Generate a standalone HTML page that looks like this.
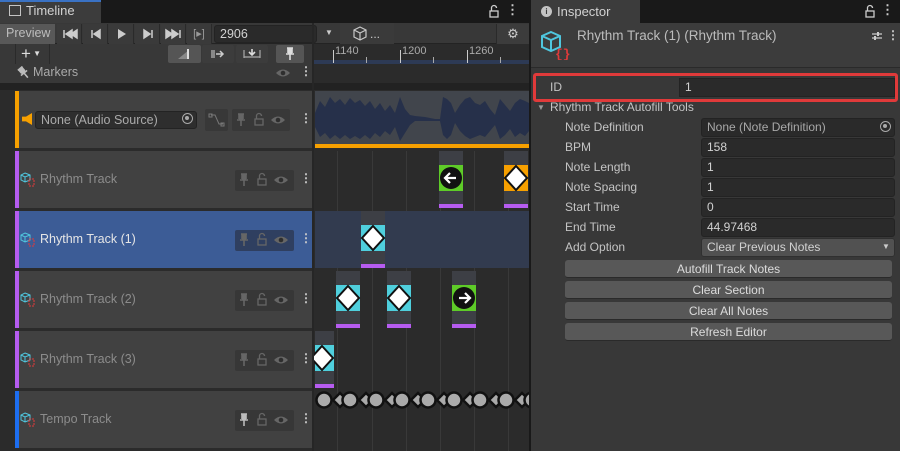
<!DOCTYPE html>
<html><head><meta charset="utf-8"><style>
*{box-sizing:border-box;margin:0;padding:0}
html,body{width:900px;height:451px;overflow:hidden}
body{background:#191919;font-family:"Liberation Sans",sans-serif;font-size:12px;color:#c4c4c4;position:relative}
.a{position:absolute}
.btn{position:absolute;background:#464646;border-radius:2px}
.fld{position:absolute;background:#2a2a2a;border:1px solid #232323;border-radius:3px;color:#d2d2d2;padding-left:5px;line-height:17px;font-size:12px}
.lbl{position:absolute;color:#c4c4c4;font-size:12px}
.ib{position:absolute;top:24px;width:25px;height:20px;border-right:1px solid #2a2a2a;background:#3a3a3a}
.ibtn{position:absolute;left:565px;width:327px;height:18px;background:#585858;border-radius:3px;text-align:center;line-height:18px;color:#dcdcdc;font-size:12px;border-bottom:1px solid #2a2a2a}
.vl{position:absolute;top:151px;height:300px;width:1px;background:#393939}
</style></head><body>
<svg width="0" height="0" style="position:absolute"><defs>
<g id="pin"><path d="M-3 -6 L3 -6 M-2 -6 L-2 -1 M2 -6 L2 -1 M-4 0 L4 0 M0 0 L0 6" stroke="currentColor" stroke-width="1.6" fill="none"/><rect x="-2" y="-6" width="4" height="6" fill="currentColor"/></g>
<g id="lock"><rect x="-4" y="-1" width="8" height="6" fill="none" stroke="currentColor" stroke-width="1.3"/><path d="M-2.5 -1 L-2.5 -4 A2.5 2.5 0 0 1 2.5 -4" fill="none" stroke="currentColor" stroke-width="1.3"/></g>
<g id="eye"><path d="M-7 0 Q0 -7 7 0 Q0 7 -7 0 Z" fill="currentColor"/><circle cx="0" cy="0" r="2.3" fill="#2e2e2e"/></g>
<g id="ple"><use href="#pin" x="9"/><use href="#lock" x="27"/><use href="#eye" x="46"/></g>
</defs></svg>

<!-- tabs -->
<div class="a" style="left:0;top:0;width:101px;height:23px;background:#3c3c3c;border-top:2px solid #3a72c4"></div>
<div class="a" style="left:9px;top:5px;width:12px;height:11px;border:1px solid #c4c4c4"></div>
<div class="a" style="left:26px;top:3px;font-size:13px;color:#d2d2d2">Timeline</div>
<svg class="a" style="left:488px;top:4px;color:#ccc" width="12" height="14"><use href="#lock" x="6" y="8"/></svg>
<div class="a" style="left:506px;top:2px;color:#ccc;font-size:13px;font-weight:bold">&#8942;</div>

<!-- timeline panel -->
<div class="a" style="left:0;top:23px;width:529px;height:428px;background:#2b2b2b"></div>
<div class="a" style="left:0;top:23px;width:529px;height:21px;background:#383838;border-bottom:1px solid #232323"></div>
<div class="a" style="left:0;top:24px;width:55px;height:20px;background:#585858;color:#bdbdbd;font-size:12.5px;line-height:19px;padding-left:6px">Preview</div>
<div class="ib" style="left:57px"><svg width="25" height="20"><path d="M7 6 L7 14 M15 6 L9 10 L15 14Z M20 6 L14 10 L20 14Z" stroke="#ccc" fill="#ccc" stroke-width="1.5"/></svg></div>
<div class="ib" style="left:83px"><svg width="25" height="20"><path d="M9 6 L9 14 M17 6 L11 10 L17 14Z" stroke="#ccc" fill="#ccc" stroke-width="1.5"/></svg></div>
<div class="ib" style="left:109px"><svg width="25" height="20"><path d="M9 5 L17 10 L9 15Z" fill="#ccc"/></svg></div>
<div class="ib" style="left:135px"><svg width="25" height="20"><path d="M17 6 L17 14 M9 6 L15 10 L9 14Z" stroke="#ccc" fill="#ccc" stroke-width="1.5"/></svg></div>
<div class="ib" style="left:161px"><svg width="25" height="20"><path d="M19 6 L19 14 M5 6 L11 10 L5 14Z M11 6 L17 10 L11 14Z" stroke="#ccc" fill="#ccc" stroke-width="1.5"/></svg></div>
<div class="ib" style="left:187px;width:25px;color:#999;font-size:11px;line-height:20px;text-align:center">[&#9656;]</div>
<div class="fld" style="left:214px;top:25px;width:103px;height:18px;font-size:12.5px">2906</div>
<div class="a" style="left:325px;top:28px;color:#ccc;font-size:8px">&#9660;</div>
<div class="a" style="left:340px;top:23px;width:54px;height:21px;background:#3a3a3a"></div>
<svg class="a" style="left:352px;top:26px" width="16" height="16" viewBox="0 0 16 16"><path d="M8 1 L14 4 L14 11 L8 14 L2 11 L2 4 Z M2 4 L8 7 L14 4 M8 7 L8 14" fill="none" stroke="#c8c8c8" stroke-width="1.2"/></svg>
<div class="a" style="left:370px;top:27px;color:#ccc">...</div>
<div class="a" style="left:496px;top:24px;width:33px;height:20px;background:#3c3c3c;border-left:1px solid #2a2a2a;text-align:center;color:#ccc;font-size:13px;line-height:20px">&#9881;&#xFE0E;</div>

<!-- row 2 -->
<div class="a" style="left:0;top:44px;width:313px;height:20px;background:#383838"></div>
<div class="a" style="left:15px;top:44px;width:35px;height:20px;border-left:1px solid #2a2a2a;border-right:1px solid #2a2a2a;color:#ddd;font-size:17px;line-height:19px;padding-left:5px">+<span style="font-size:8px;vertical-align:3px"> &#9660;</span></div>
<div class="btn" style="left:168px;top:45px;width:33px;height:18px;background:#555"><svg width="33" height="18"><path d="M10 14 L21 14 L21 5 Z" fill="#888"/><rect x="19" y="4" width="2" height="10" fill="#ddd"/></svg></div>
<div class="btn" style="left:202px;top:45px;width:32px;height:18px;background:#3c3c3c"><svg width="32" height="18"><rect x="9" y="5" width="4" height="8" fill="#888"/><path d="M14 9 L21 9 M18 6 L21 9 L18 12" stroke="#ccc" stroke-width="1.5" fill="none"/></svg></div>
<div class="btn" style="left:236px;top:45px;width:32px;height:18px;background:#3c3c3c"><svg width="32" height="18"><path d="M8 5 L8 13 M24 5 L24 13 M8 12 L24 12" stroke="#aaa" stroke-width="1.2"/><path d="M16 4 L16 10 M13 7 L16 10 L19 7" stroke="#ddd" stroke-width="1.6" fill="none"/></svg></div>
<div class="btn" style="left:276px;top:45px;width:28px;height:18px;background:#555"><svg width="28" height="18" style="color:#ddd"><use href="#pin" x="14" y="9"/></svg></div>

<!-- ruler -->
<div class="a" style="left:314px;top:44px;width:215px;height:20px;background:#2b2b2b"></div>
<div class="a" style="left:314px;top:60px;width:215px;height:4px;background:#2d3a55"></div>
<div class="a" style="left:333px;top:50px;width:1px;height:13px;background:#ccc"></div>
<div class="a" style="left:400px;top:50px;width:1px;height:13px;background:#ccc"></div>
<div class="a" style="left:467px;top:50px;width:1px;height:13px;background:#ccc"></div>
<div class="a" style="left:366px;top:57px;width:1px;height:6px;background:#aaa"></div>
<div class="a" style="left:433px;top:57px;width:1px;height:6px;background:#aaa"></div>
<div class="a" style="left:500px;top:57px;width:1px;height:6px;background:#aaa"></div>
<div class="a" style="left:335px;top:45px;color:#aaa;font-size:11px">1140</div>
<div class="a" style="left:402px;top:45px;color:#aaa;font-size:11px">1200</div>
<div class="a" style="left:469px;top:45px;color:#aaa;font-size:11px">1260</div>

<!-- markers -->
<div class="a" style="left:0;top:64px;width:313px;height:19px;background:#383838"></div>
<svg class="a" style="left:17px;top:66px;color:#bbb" width="14" height="14"><g transform="rotate(-40 7 7)"><use href="#pin" x="7" y="7"/></g></svg>
<div class="a" style="left:33px;top:65px;color:#aaa;font-size:12.5px">Markers</div>
<svg class="a" style="left:274px;top:66px;color:#666" width="18" height="14"><use href="#eye" x="9" y="7"/></svg>
<div class="a" style="left:300px;top:64px;color:#ccc;font-weight:bold">&#8942;</div>
<div class="a" style="left:0;top:83px;width:529px;height:7px;background:#222"></div>
<div class="a" style="left:312px;top:23px;width:2px;height:428px;background:#262626"></div>
<div class="a" style="left:529px;top:0;width:2px;height:451px;background:#191919"></div>

<!-- grid lines -->
<div class="vl" style="left:337px"></div><div class="vl" style="left:372px"></div><div class="vl" style="left:406px"></div><div class="vl" style="left:440px"></div><div class="vl" style="left:474px"></div><div class="vl" style="left:508px"></div>

<!-- track headers -->
<div class="a" style="left:15px;top:91px;width:297px;height:57px;background:#414141;border-left:4px solid #f7a000"></div>
<div class="a" style="left:22px;top:113px;width:10px;height:12px;background:#f7a000;clip-path:polygon(0 30%,40% 30%,100% 0,100% 100%,40% 70%,0 70%)"></div>
<div class="fld" style="left:35px;top:111px;width:162px;height:18px;color:#aaa;font-size:12.5px;background:#2e2e2e">None (Audio Source)</div>
<div class="a" style="left:182px;top:113px;width:11px;height:11px;border:1.5px solid #aaa;border-radius:50%"><div style="margin:2px;width:4px;height:4px;border-radius:50%;background:#aaa"></div></div>
<div class="btn" style="left:205px;top:109px;width:23px;height:22px;background:#383838"><svg width="23" height="22"><path d="M6 6 L10 6 L14 15 L18 15" stroke="#777" fill="none"/><rect x="4" y="5" width="3" height="3" fill="none" stroke="#777"/><rect x="16" y="14" width="3" height="3" fill="none" stroke="#777"/></svg></div>
<div class="btn" style="left:232px;top:109px;width:58px;height:22px;background:#383838;color:#666"><svg width="58" height="22"><use href="#ple" y="11"/></svg></div>
<div class="a" style="left:300px;top:111px;color:#ccc;font-weight:bold">&#8942;</div>

<!-- rhythm tracks -->
<div class="a" style="left:15px;top:151px;width:297px;height:57px;background:#414141;border-left:4px solid #b55cf0"></div>
<div class="a" style="left:15px;top:211px;width:297px;height:57px;background:#3c5c96;border-left:4px solid #b55cf0"></div>
<div class="a" style="left:15px;top:271px;width:297px;height:57px;background:#414141;border-left:4px solid #b55cf0"></div>
<div class="a" style="left:15px;top:331px;width:297px;height:57px;background:#414141;border-left:4px solid #b55cf0"></div>
<div class="a" style="left:15px;top:391px;width:297px;height:57px;background:#414141;border-left:4px solid #1d6ef0"></div>

<div class="a" style="left:40px;top:172px;color:#8c8c8c;font-size:12.5px">Rhythm Track</div>
<div class="a" style="left:40px;top:232px;color:#e6e6e6;font-size:12.5px">Rhythm Track (1)</div>
<div class="a" style="left:40px;top:292px;color:#8c8c8c;font-size:12.5px">Rhythm Track (2)</div>
<div class="a" style="left:40px;top:352px;color:#8c8c8c;font-size:12.5px">Rhythm Track (3)</div>
<div class="a" style="left:40px;top:412px;color:#8c8c8c;font-size:12.5px">Tempo Track</div>

<svg class="a" style="left:20px;top:172px" width="16" height="300" viewBox="0 0 16 300">
<g id="ic"><path d="M5 1 L10 3 L10 8 L5 10 L1 8 L1 3 Z M1 3 L5 5 L10 3 M5 5 L5 10" fill="none" stroke="#4fc6de" stroke-width="1"/><rect x="9" y="7" width="5" height="7" fill="none" stroke="#e03a3a" stroke-width="1" stroke-dasharray="2 1"/></g>
<use href="#ic" y="60"/><use href="#ic" y="120"/><use href="#ic" y="180"/><use href="#ic" y="240"/></svg>

<div class="btn" style="left:235px;top:170px;width:59px;height:21px;background:#373737;color:#666"><svg width="59" height="21"><use href="#ple" y="10"/></svg></div>
<div class="btn" style="left:235px;top:230px;width:59px;height:21px;background:#2f3f60;color:#666"><svg width="59" height="21"><use href="#ple" y="10"/></svg></div>
<div class="btn" style="left:235px;top:290px;width:59px;height:21px;background:#373737;color:#666"><svg width="59" height="21"><use href="#ple" y="10"/></svg></div>
<div class="btn" style="left:235px;top:350px;width:59px;height:21px;background:#373737;color:#666"><svg width="59" height="21"><use href="#ple" y="10"/></svg></div>
<div class="btn" style="left:235px;top:410px;width:59px;height:21px;background:#373737;color:#666"><svg width="59" height="21"><use href="#lock" x="27" y="10"/><use href="#eye" x="46" y="10"/><g style="color:#bbb"><use href="#pin" x="9" y="10"/></g></svg></div>
<div class="a" style="left:300px;top:171px;color:#ccc;font-weight:bold">&#8942;</div>
<div class="a" style="left:300px;top:231px;color:#ccc;font-weight:bold">&#8942;</div>
<div class="a" style="left:300px;top:291px;color:#ccc;font-weight:bold">&#8942;</div>
<div class="a" style="left:300px;top:351px;color:#ccc;font-weight:bold">&#8942;</div>
<div class="a" style="left:300px;top:411px;color:#ccc;font-weight:bold">&#8942;</div>

<!-- timeline content -->
<div class="a" style="left:315px;top:91px;width:214px;height:57px;background:#41454c"></div>
<svg class="a" style="left:315px;top:91px" width="214" height="57" viewBox="0 0 214 57">
<path d="M0 22 L5 10 L10 16 L15 6 L20 12 L25 8 L30 14 L35 7 L40 12 L45 9 L50 15 L55 10 L60 18 L65 12 L70 20 L75 14 L80 22 L85 6 L90 18 L95 24 L100 25 L110 26 L115 27 L120 28 L125 28 L128 6 L132 8 L136 12 L140 22 L145 14 L150 8 L155 6 L160 12 L165 14 L170 10 L175 18 L180 24 L185 8 L190 14 L195 20 L200 12 L205 8 L210 10 L214 12 L214 40 L210 45 L205 42 L200 46 L195 38 L190 44 L185 48 L180 34 L175 40 L170 46 L165 44 L160 46 L155 48 L150 45 L145 40 L140 32 L136 44 L132 48 L128 44 L125 30 L115 30 L100 30 L95 34 L90 42 L85 50 L80 36 L75 44 L70 40 L65 46 L60 42 L55 48 L50 44 L45 48 L40 45 L35 48 L30 44 L25 48 L20 44 L15 48 L10 42 L5 46 L0 36 Z" fill="#26304a"/>
<rect x="0" y="53" width="214" height="4" fill="#f7a000"/></svg>

<div class="a" style="left:315px;top:211px;width:214px;height:57px;background:#323b4f"></div>

<svg class="a" style="left:314px;top:151px" width="215" height="300" viewBox="0 0 215 300">
<defs>
<g id="blk"><rect x="0" y="0" width="24" height="57" fill="#3d3f45"/><rect x="0" y="53" width="24" height="4" fill="#b65cf0"/></g>
<g id="dia"><rect x="0" y="14" width="24" height="26" fill="#4fcfdd"/><path d="M12 15 L23 27 L12 39 L1 27 Z" fill="#fff" stroke="#111" stroke-width="2"/></g>
</defs>
<use href="#blk" x="125"/><rect x="125" y="14" width="24" height="26" fill="#5ecb28"/><circle cx="137" cy="27" r="11" fill="#111"/><path d="M142 27 L132 27 M136 22 L131 27 L136 32" stroke="#fff" stroke-width="2.2" fill="none"/>
<use href="#blk" x="190"/><rect x="190" y="14" width="24" height="26" fill="#f7a000"/><path d="M202 15 L213 27 L202 39 L191 27 Z" fill="#fff" stroke="#111" stroke-width="2"/>
<use href="#blk" x="47" y="60"/><use href="#dia" x="47" y="60"/>
<use href="#blk" x="22" y="120"/><use href="#dia" x="22" y="120"/>
<use href="#blk" x="73" y="120"/><use href="#dia" x="73" y="120"/>
<use href="#blk" x="138" y="120"/><rect x="138" y="134" width="24" height="26" fill="#5ecb28"/><circle cx="150" cy="147" r="11" fill="#111"/><path d="M145 147 L155 147 M151 142 L156 147 L151 152" stroke="#fff" stroke-width="2.2" fill="none"/>
<rect x="1" y="180" width="19" height="57" fill="#3d3f45"/><rect x="1" y="233" width="19" height="4" fill="#b65cf0"/><rect x="1" y="194" width="19" height="26" fill="#4fcfdd"/><path d="M8 195 L19 207 L8 219 L-3 207 Z" fill="#fff" stroke="#111" stroke-width="2"/>
<g fill="#aaa" stroke="#111" stroke-width="2.5">
<circle cx="10" cy="249" r="7.5"/><path d="M26 242 L33 249 L26 256 L19 249Z"/><circle cx="36" cy="249" r="7.5"/><path d="M52 242 L59 249 L52 256 L45 249Z"/><circle cx="62" cy="249" r="7.5"/><path d="M78 242 L85 249 L78 256 L71 249Z"/><circle cx="88" cy="249" r="7.5"/><path d="M104 242 L111 249 L104 256 L97 249Z"/><circle cx="114" cy="249" r="7.5"/><path d="M130 242 L137 249 L130 256 L123 249Z"/><circle cx="140" cy="249" r="7.5"/><path d="M156 242 L163 249 L156 256 L149 249Z"/><circle cx="166" cy="249" r="7.5"/><path d="M182 242 L189 249 L182 256 L175 249Z"/><circle cx="192" cy="249" r="7.5"/><path d="M208 242 L215 249 L208 256 L201 249Z"/><circle cx="218" cy="249" r="7.5"/>
</g></svg>

<!-- inspector -->
<div class="a" style="left:531px;top:0;width:109px;height:23px;background:#3c3c3c"></div>
<div class="a" style="left:541px;top:6px;width:11px;height:11px;border-radius:50%;background:#c4c4c4;color:#3c3c3c;font-size:8px;text-align:center;line-height:11px;font-weight:bold">i</div>
<div class="a" style="left:557px;top:4px;font-size:13px;color:#d2d2d2">Inspector</div>
<svg class="a" style="left:864px;top:4px;color:#ccc" width="12" height="14"><use href="#lock" x="6" y="8"/></svg>
<div class="a" style="left:881px;top:2px;color:#ccc;font-size:13px;font-weight:bold">&#8942;</div>
<div class="a" style="left:531px;top:23px;width:369px;height:428px;background:#383838"></div>
<div class="a" style="left:531px;top:23px;width:369px;height:45px;background:#3c3c3c;border-bottom:1px solid #2a2a2a"></div>
<svg class="a" style="left:540px;top:30px" width="34" height="30" viewBox="0 0 34 30"><path d="M11 2 L20 6 L20 17 L11 21 L2 17 L2 6 Z M2 6 L11 10 L20 6 M11 10 L11 21" fill="none" stroke="#4fc6de" stroke-width="2"/><text x="15" y="28" fill="#e03a3a" font-size="13" font-family="Liberation Mono" font-weight="bold">{}</text></svg>
<div class="a" style="left:577px;top:28px;font-size:13.5px;color:#bcbcbc">Rhythm Track (1) (Rhythm Track)</div>
<svg class="a" style="left:871px;top:30px" width="12" height="12"><path d="M1 4 L11 4 M1 8 L11 8" stroke="#ccc" stroke-width="1.3"/><rect x="6" y="2" width="2" height="4" fill="#ccc"/><rect x="3" y="6" width="2" height="4" fill="#ccc"/></svg>
<div class="a" style="left:887px;top:28px;color:#ccc;font-weight:bold">&#8942;</div>

<div class="a" style="left:533px;top:73px;width:365px;height:29px;border:3px solid #e03a3a;border-radius:3px;background:#383838"></div>
<div class="lbl" style="left:550px;top:80px">ID</div>
<div class="fld" style="left:679px;top:78px;width:216px;height:19px;border-radius:0">1</div>
<div class="a" style="left:537px;top:103px;color:#999;font-size:8px">&#9660;</div>
<div class="lbl" style="left:550px;top:100px">Rhythm Track Autofill Tools</div>

<div class="lbl" style="left:565px;top:120px">Note Definition</div><div class="fld" style="left:701px;top:118px;width:194px;height:19px;color:#a8a8a8">None (Note Definition)</div>
<div class="a" style="left:880px;top:121px;width:11px;height:11px;border:1.5px solid #aaa;border-radius:50%"><div style="margin:2px;width:4px;height:4px;border-radius:50%;background:#aaa"></div></div>
<div class="lbl" style="left:565px;top:140px">BPM</div><div class="fld" style="left:701px;top:138px;width:194px;height:19px">158</div>
<div class="lbl" style="left:565px;top:160px">Note Length</div><div class="fld" style="left:701px;top:158px;width:194px;height:19px">1</div>
<div class="lbl" style="left:565px;top:180px">Note Spacing</div><div class="fld" style="left:701px;top:178px;width:194px;height:19px">1</div>
<div class="lbl" style="left:565px;top:200px">Start Time</div><div class="fld" style="left:701px;top:198px;width:194px;height:19px">0</div>
<div class="lbl" style="left:565px;top:220px">End Time</div><div class="fld" style="left:701px;top:218px;width:194px;height:19px">44.97468</div>
<div class="lbl" style="left:565px;top:240px">Add Option</div><div class="fld" style="left:701px;top:238px;width:194px;height:19px;background:#515151;border-color:#303030">Clear Previous Notes</div>
<div class="a" style="left:882px;top:242px;color:#ccc;font-size:8px">&#9660;</div>

<div class="ibtn" style="top:260px">Autofill Track Notes</div>
<div class="ibtn" style="top:281px">Clear Section</div>
<div class="ibtn" style="top:302px">Clear All Notes</div>
<div class="ibtn" style="top:323px">Refresh Editor</div>
</body></html>
